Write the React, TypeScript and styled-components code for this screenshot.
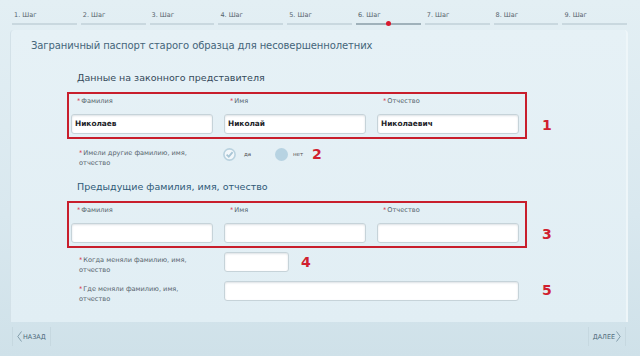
import React from "react";
import styled, { createGlobalStyle } from "styled-components";

const Global = createGlobalStyle`
  html, body { margin: 0; padding: 0; }
  body { font-family: "DejaVu Sans", Verdana, sans-serif; }
  * { box-sizing: border-box; }
`;

const Page = styled.div`
  width: 640px;
  height: 356px;
  overflow: hidden;
  display: flex;
  flex-direction: column;
  background: linear-gradient(180deg, #e3eff4 0%, #d9e8ef 60%, #cfe1e9 100%);
`;

const StepBar = styled.div`
  height: 30px;
  display: flex;
  padding: 10px 0 0 12px;
`;

const Step = styled.div<{ $active?: boolean }>`
  width: 68.8px;
  padding-right: 4px;
  position: relative;
  font-size: 6.5px;
  color: #55636c;
  & > span {
    display: block;
    padding-left: 2px;
    line-height: 10px;
  }
  &::after {
    content: "";
    display: block;
    margin-top: 3px;
    height: 2px;
    background: ${(p) => (p.$active ? "#9fb1ba" : "#c9d8df")};
  }
`;

const Dot = styled.i`
  position: absolute;
  left: 30px;
  top: 11px;
  width: 5px;
  height: 5px;
  border-radius: 50%;
  background: #d8182c;
`;

const Panel = styled.div`
  margin: 0 12px 0 10px;
  height: 292px;
  background: linear-gradient(180deg, #e6f1f6 0%, #e1eef4 100%);
  border-left: 1px solid #d3e1e8;
  border-right: 2px solid #eef6f9;
  border-radius: 4px 4px 0 0;
  padding: 9px 0 0 20px;
  display: flex;
  flex-direction: column;
`;

const Title = styled.div`
  font-size: 10px;
  line-height: 14px;
  color: #44657a;
  letter-spacing: -0.1px;
`;

const Heading = styled.div<{ $top: number; $blue?: boolean }>`
  margin: ${(p) => p.$top}px 0 0 46px;
  font-size: 9.5px;
  line-height: 14px;
  color: ${(p) => (p.$blue ? "#2f5a78" : "#34495a")};
`;

const GroupRow = styled.div<{ $top: number }>`
  margin: ${(p) => p.$top}px 0 0 36px;
  display: flex;
  align-items: flex-end;
`;

const RedBox = styled.div`
  width: 460px;
  height: 47px;
  border: 2px solid #c81e2c;
  padding: 2px 0 0 2px;
  display: grid;
  grid-template-columns: 142px 142px 142px;
  column-gap: 11px;
`;

const Field = styled.div`
  display: flex;
  flex-direction: column;
`;

const required = `
  &::before {
    content: "*";
    color: #d8364c;
    margin-right: 1px;
  }
`;

const Label = styled.div`
  font-size: 6.6px;
  line-height: 10px;
  height: 18px;
  padding-left: 6px;
  color: #56646d;
  ${required}
`;

const Input = styled.div<{ $w?: number }>`
  width: ${(p) => (p.$w ? p.$w + "px" : "100%")};
  height: 20px;
  flex: none;
  background: #fff;
  border: 1px solid #c6d3d9;
  border-radius: 3px;
  box-shadow: inset 0 1px 2px rgba(120, 140, 150, 0.25);
  font-size: 7.4px;
  font-weight: bold;
  color: #1c2227;
  line-height: 18px;
  padding-left: 3px;
`;

const Num = styled.div<{ $gap: number; $bottom?: number }>`
  margin-left: ${(p) => p.$gap}px;
  margin-bottom: ${(p) => p.$bottom ?? 0}px;
  color: #d0202e;
  font-size: 14px;
  line-height: 16px;
  font-weight: bold;
  font-family: "DejaVu Sans", sans-serif;
`;

const FormRow = styled.div<{ $top: number }>`
  margin: ${(p) => p.$top}px 0 0 48px;
  display: flex;
  align-items: flex-start;
`;

const RowLabel = styled.div<{ $pad?: number }>`
  width: 145px;
  flex: none;
  font-size: 6.6px;
  line-height: 10px;
  color: #56646d;
  padding: ${(p) => p.$pad ?? 0}px 20px 0 0;
  ${required}
`;

const Choices = styled.div`
  display: flex;
  align-items: center;
  height: 12px;
  margin-left: -1px;
`;

const Choice = styled.div<{ $w: number; $gap: number }>`
  width: ${(p) => p.$w}px;
  display: flex;
  align-items: center;
  gap: ${(p) => p.$gap}px;
  font-size: 5.5px;
  color: #555;
`;

const Circle = styled.div`
  width: 13px;
  height: 13px;
  border-radius: 50%;
  background: #b7d3e2;
`;

const Footer = styled.div`
  flex: 1;
  display: flex;
  justify-content: space-between;
  align-items: flex-start;
  padding: 5px 14px 0 12px;
`;

const NavButton = styled.div`
  height: 19px;
  display: flex;
  align-items: center;
  gap: 1px;
  font-size: 6.4px;
  color: #4f6a7a;
  padding: 0 4px;
  border-left: 1px solid #c6d8e0;
  border-right: 1px solid #c6d8e0;
  svg { display: block; }
`;

const Chevron = ({ dir }: { dir: "l" | "r" }) => (
  <svg width="5" height="11" viewBox="0 0 5 11">
    <path
      d={dir === "l" ? "M4.5 0.5 L0.8 5.5 L4.5 10.5" : "M0.5 0.5 L4.2 5.5 L0.5 10.5"}
      fill="none"
      stroke="#7b96a5"
      strokeWidth="0.9"
    />
  </svg>
);

const CheckCircle = () => (
  <svg width="13" height="13" viewBox="0 0 13 13">
    <circle cx="6.5" cy="6.5" r="5.6" fill="#f2f7fa" stroke="#b9d2df" strokeWidth="1.6" />
    <path d="M3.6 6.6 L5.8 8.6 L9.6 4.2" fill="none" stroke="#a9c6d6" strokeWidth="1.8" />
  </svg>
);

const steps = ["1. Шаг", "2. Шаг", "3. Шаг", "4. Шаг", "5. Шаг", "6. Шаг", "7. Шаг", "8. Шаг", "9. Шаг"];

const NameGroup = ({ values }: { values: string[] }) => (
  <RedBox>
    {["Фамилия", "Имя", "Отчество"].map((l, i) => (
      <Field key={l}>
        <Label>{l}</Label>
        <Input>{values[i]}</Input>
      </Field>
    ))}
  </RedBox>
);

export default function App() {
  return (
    <Page>
      <Global />
      <StepBar>
        {steps.map((s, i) => (
          <Step key={s} $active={i === 5}>
            <span>{s}</span>
            {i === 5 && <Dot />}
          </Step>
        ))}
      </StepBar>
      <Panel>
        <Title>Заграничный паспорт старого образца для несовершеннолетних</Title>
        <Heading $top={18}>Данные на законного представителя</Heading>
        <GroupRow $top={7}>
          <NameGroup values={["Николаев", "Николай", "Николаевич"]} />
          <Num $gap={15} $bottom={6}>1</Num>
        </GroupRow>
        <FormRow $top={9}>
          <RowLabel>Имели другие фамилию, имя, отчество</RowLabel>
          <Choices>
            <Choice $w={52} $gap={8}>
              <CheckCircle />
              да
            </Choice>
            <Choice $w={37} $gap={5}>
              <Circle />
              нет
            </Choice>
            <Num $gap={0}>2</Num>
          </Choices>
        </FormRow>
        <Heading $top={12} $blue>
          Предыдущие фамилия, имя, отчество
        </Heading>
        <GroupRow $top={7}>
          <NameGroup values={["", "", ""]} />
          <Num $gap={15} $bottom={6}>3</Num>
        </GroupRow>
        <FormRow $top={4}>
          <RowLabel $pad={3}>Когда меняли фамилию, имя, отчество</RowLabel>
          <Input $w={65} />
          <Num $gap={12} style={{ marginTop: 2 }}>4</Num>
        </FormRow>
        <FormRow $top={6}>
          <RowLabel $pad={3}>Где меняли фамилию, имя, отчество</RowLabel>
          <Input $w={295} />
          <Num $gap={23} style={{ marginTop: 1 }}>5</Num>
        </FormRow>
      </Panel>
      <Footer>
        <NavButton>
          <Chevron dir="l" />
          НАЗАД
        </NavButton>
        <NavButton>
          ДАЛЕЕ
          <Chevron dir="r" />
        </NavButton>
      </Footer>
    </Page>
  );
}
